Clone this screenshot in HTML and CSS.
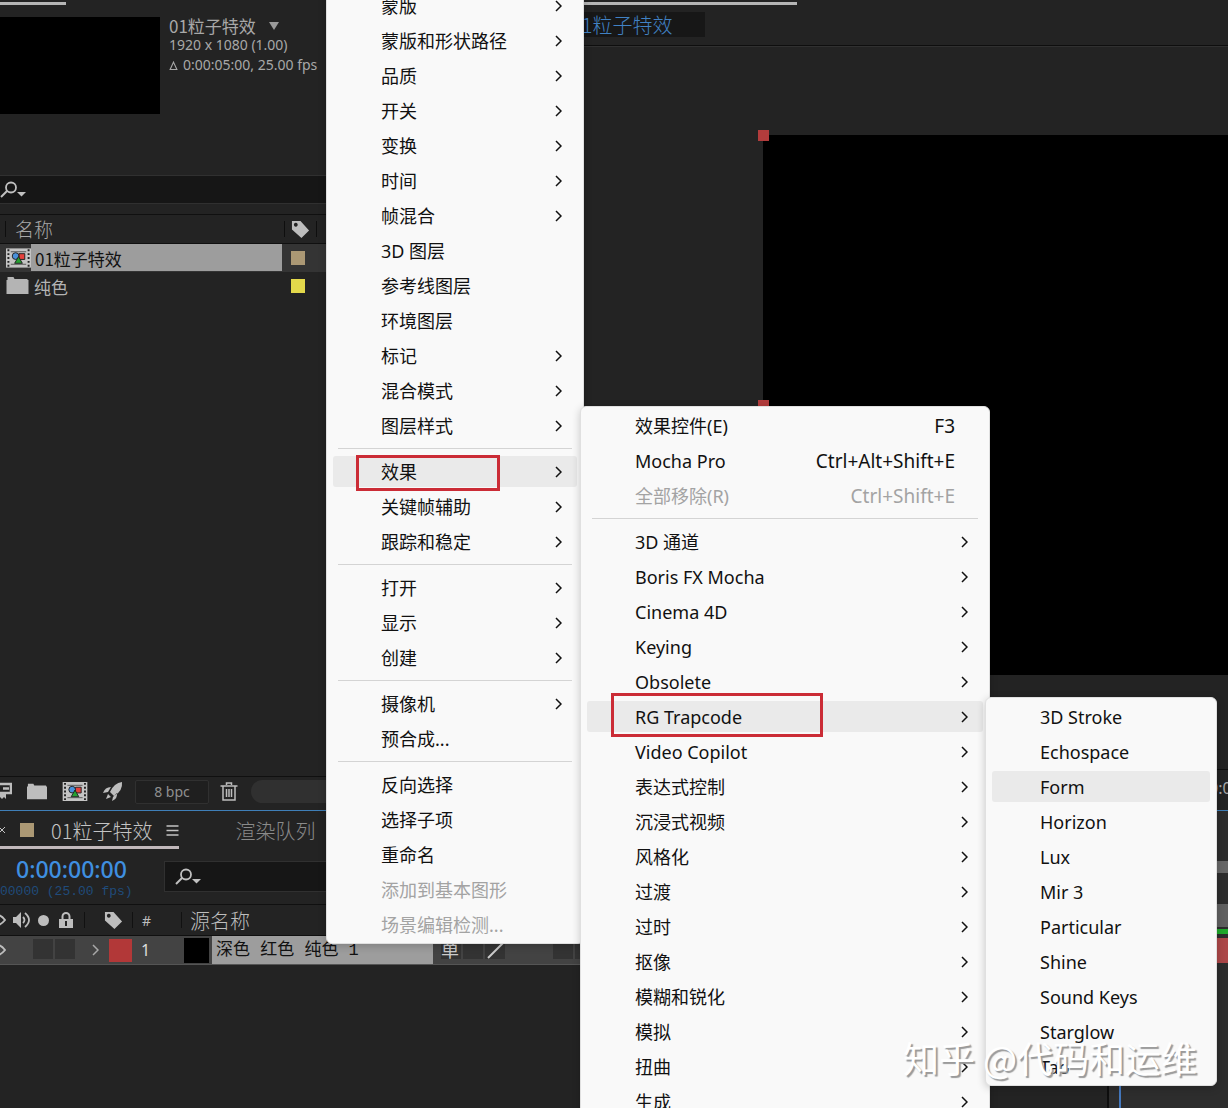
FILE: index.html
```
<!DOCTYPE html>
<html lang="zh-CN">
<head>
    <meta charset="UTF-8">
    <meta name="viewport" content="width=device-width, initial-scale=1.0">
    <title>01粒子特效</title>
    <link rel="stylesheet" href="styles.css">
</head>
<body>
    <!-- shared icons -->
    <svg class="sprite" aria-hidden="true">
        <symbol id="chevron" viewBox="0 0 7 12"><path d="M1 1l5 5-5 5" fill="none" stroke="currentColor" stroke-width="1.5"/></symbol>
        <symbol id="search" viewBox="0 0 26 18"><circle cx="11" cy="6.500" r="5" fill="none" stroke="currentColor" stroke-width="1.800"/><path d="M7 10l-6 6" stroke="currentColor" stroke-width="2"/><path d="M17 11h9l-4.500 4.500z" fill="currentColor"/></symbol>
        <symbol id="tag" viewBox="0 0 20 20"><path fill="currentColor" fill-rule="evenodd" d="M1 1h9l9 10-8 8L1 10zM5 3a2 2 0 1 0 .1 0z"/></symbol>
        <symbol id="folder" viewBox="0 0 22 17"><path fill="currentColor" d="M1 0h6l1 2h13v1H1zM0 3h22v14H0z"/></symbol>
        <symbol id="comp" viewBox="0 0 26 20">
            <path fill="#c4c4c4" d="M0 0h26v20H0z"/>
            <path fill="none" stroke="#222" stroke-width="2" stroke-dasharray="2 2" d="M2.500 1v18M23.500 1v18"/>
            <path fill="none" stroke="#555" d="M5 3.500h16M5 16.500h16"/>
            <path fill="#e5403c" stroke="#222" d="M13.500 5.500h6v6h-6z"/>
            <circle cx="10" cy="8" r="3.500" fill="#4a90d9" stroke="#222"/>
            <path fill="#25a233" stroke="#222" d="M13 8.500l4 7H9z"/>
        </symbol>
        <symbol id="eye" viewBox="0 0 18 12"><path fill="none" stroke="currentColor" stroke-width="2" d="M1 6q8-10 16 0-8 10-16 0z"/><circle cx="9" cy="6" r="2.500" fill="currentColor"/></symbol>
    </svg>

    <main class="app">
        <div class="workspace">
            <section class="project">
                <div class="tabline"></div>
                <div class="preview">
                    <div class="thumb"></div>
                    <div class="info">
                        <p class="comp-name">01粒子特效 <span class="caret"></span></p>
                        <p>1920 x 1080 (1.00)</p>
                        <p class="duration"><svg viewBox="0 0 8 8"><path fill="none" stroke="currentColor" d="M4 1l3 6.500H1z"/></svg>0:00:05:00, 25.00 fps</p>
                    </div>
                </div>
                <label class="search"><svg><use href="#search"/></svg><input type="text" aria-label="搜索项目"></label>
                <table class="items">
                    <thead>
                        <tr><th>名称</th><th class="label"><svg aria-label="标签"><use href="#tag"/></svg></th><th></th></tr>
                    </thead>
                    <tbody>
                        <tr class="selected">
                            <td><div class="item"><svg><use href="#comp"/></svg><span>01粒子特效</span></div></td>
                            <td class="label"><i class="swatch tan"></i></td><td></td>
                        </tr>
                        <tr>
                            <td><div class="item"><svg class="folder"><use href="#folder"/></svg><span>纯色</span></div></td>
                            <td class="label"><i class="swatch yellow"></i></td><td></td>
                        </tr>
                    </tbody>
                </table>
                <div class="project-bar">
                    <button aria-label="解释素材"><svg viewBox="0 0 12 19"><path fill="none" stroke="currentColor" stroke-width="2.500" d="M0 2h11v9H0M3 6.500h6"/><path fill="currentColor" d="M0 11h6v6l-2-2-2 2-2-2z"/></svg></button>
                    <button aria-label="新建文件夹"><svg viewBox="0 0 20 18"><use href="#folder" width="20" height="18"/></svg></button>
                    <button aria-label="新建合成"><svg class="wide"><use href="#comp"/></svg></button>
                    <button aria-label="项目设置"><svg viewBox="0 0 20 19"><path fill="currentColor" d="M19 0q-8 1-12 10l4 4Q20 9 19 0zM8 5q-6 0-8 6l5-1zM14 11q1 5-5 8l1-4zM5 12l3 3-5 2z"/></svg></button>
                    <button class="depth">8 bpc</button>
                    <button aria-label="删除"><svg viewBox="0 0 17 19"><path fill="none" stroke="currentColor" stroke-width="1.500" d="M0 4h17M6 3V1h5v2M2.500 4v14h12V4M6 7v8M8.500 7v8M11 7v8"/></svg></button>
                    <div class="scroller"></div>
                </div>
            </section>
            <section class="viewer">
                <div class="tabline"></div>
                <div class="crumbs"><a href="#">01粒子特效</a></div>
                <div class="stage">
                    <div class="canvas"><i class="handle corner"></i><i class="handle middle"></i></div>
                </div>
                <div class="viewer-bar">0:00:00:00</div>
            </section>
        </div>

        <section class="timeline">
            <div class="layers">
                <div class="tabs">
                    <button class="close" aria-label="关闭"><svg viewBox="0 0 6 8"><path stroke="currentColor" d="M-1 1l6 6M-1 7l6-6"/></svg></button>
                    <i class="swatch tan"></i>
                    <span class="current">01粒子特效</span>
                    <svg class="burger" viewBox="0 0 12 11"><path stroke="currentColor" stroke-width="1.500" d="M0 1h12M0 5.500h12M0 10h12"/></svg>
                    <span class="queue">渲染队列</span>
                </div>
                <div class="time">
                    <div class="clock">
                        <strong>0:00:00:00</strong>
                        <span>00000 (25.00 fps)</span>
                    </div>
                    <label class="search"><svg><use href="#search"/></svg><input type="text" aria-label="搜索图层"></label>
                </div>
                <div class="columns">
                    <div class="switches">
                        <svg class="eye"><use href="#eye"/></svg>
                        <svg viewBox="0 0 18 16"><path fill="currentColor" d="M0 5h3l5-5v16l-5-5H0z"/><path fill="none" stroke="currentColor" stroke-width="1.800" d="M10 5q3 3 0 6M12 1q8 7 0 14"/></svg>
                        <i class="dot"></i>
                        <svg class="lock" viewBox="0 0 14 16"><path fill="none" stroke="currentColor" stroke-width="2" d="M3.500 8V4.500a3.500 3.500 0 0 1 7 0V8"/><path fill="currentColor" fill-rule="evenodd" d="M0 7h14v9H0zM6 9v5h2V9z"/></svg>
                    </div>
                    <div class="tagcol"><svg class="tag"><use href="#tag"/></svg></div>
                    <div class="num">#</div>
                    <div class="source">源名称</div>
                </div>
                <div class="layer">
                    <svg class="eye"><use href="#eye"/></svg>
                    <i class="cell first"></i><i class="cell"></i>
                    <svg class="twirl"><use href="#chevron"/></svg>
                    <i class="color"></i>
                    <span class="index">1</span>
                    <i class="solid"></i>
                    <span class="name">深色 红色 纯色 1</span>
                    <i class="cell mark">单</i><i class="cell"></i>
                    <i class="cell"><svg viewBox="0 0 20 20"><path stroke="#ccc" stroke-width="2" d="M3 19L18 4"/></svg></i>
                    <i class="cell far"></i><i class="cell"></i>
                </div>
            </div>
            <div class="track">
                <div class="navigator"></div>
                <div class="ruler"></div>
                <div class="cache"></div>
                <div class="clip"></div>
                <div class="playhead"></div>
            </div>
        </section>
    </main>

    <nav class="menu layer-menu" aria-label="图层">
        <button>蒙版<svg><use href="#chevron"/></svg></button>
        <button>蒙版和形状路径<svg><use href="#chevron"/></svg></button>
        <button>品质<svg><use href="#chevron"/></svg></button>
        <button>开关<svg><use href="#chevron"/></svg></button>
        <button>变换<svg><use href="#chevron"/></svg></button>
        <button>时间<svg><use href="#chevron"/></svg></button>
        <button>帧混合<svg><use href="#chevron"/></svg></button>
        <button>3D 图层</button>
        <button>参考线图层</button>
        <button>环境图层</button>
        <button>标记<svg><use href="#chevron"/></svg></button>
        <button>混合模式<svg><use href="#chevron"/></svg></button>
        <button>图层样式<svg><use href="#chevron"/></svg></button>
        <hr>
        <button class="open">效果<svg><use href="#chevron"/></svg></button>
        <button>关键帧辅助<svg><use href="#chevron"/></svg></button>
        <button>跟踪和稳定<svg><use href="#chevron"/></svg></button>
        <hr>
        <button>打开<svg><use href="#chevron"/></svg></button>
        <button>显示<svg><use href="#chevron"/></svg></button>
        <button>创建<svg><use href="#chevron"/></svg></button>
        <hr>
        <button>摄像机<svg><use href="#chevron"/></svg></button>
        <button>预合成...</button>
        <hr>
        <button>反向选择</button>
        <button>选择子项</button>
        <button>重命名</button>
        <button disabled>添加到基本图形</button>
        <button disabled>场景编辑检测...</button>
    </nav>

    <nav class="menu effect-menu" aria-label="效果">
        <button>效果控件(E)<kbd>F3</kbd></button>
        <button>Mocha Pro<kbd>Ctrl+Alt+Shift+E</kbd></button>
        <button disabled>全部移除(R)<kbd>Ctrl+Shift+E</kbd></button>
        <hr>
        <button>3D 通道<svg><use href="#chevron"/></svg></button>
        <button>Boris FX Mocha<svg><use href="#chevron"/></svg></button>
        <button>Cinema 4D<svg><use href="#chevron"/></svg></button>
        <button>Keying<svg><use href="#chevron"/></svg></button>
        <button>Obsolete<svg><use href="#chevron"/></svg></button>
        <button class="open">RG Trapcode<svg><use href="#chevron"/></svg></button>
        <button>Video Copilot<svg><use href="#chevron"/></svg></button>
        <button>表达式控制<svg><use href="#chevron"/></svg></button>
        <button>沉浸式视频<svg><use href="#chevron"/></svg></button>
        <button>风格化<svg><use href="#chevron"/></svg></button>
        <button>过渡<svg><use href="#chevron"/></svg></button>
        <button>过时<svg><use href="#chevron"/></svg></button>
        <button>抠像<svg><use href="#chevron"/></svg></button>
        <button>模糊和锐化<svg><use href="#chevron"/></svg></button>
        <button>模拟<svg><use href="#chevron"/></svg></button>
        <button>扭曲<svg><use href="#chevron"/></svg></button>
        <button>生成<svg><use href="#chevron"/></svg></button>
    </nav>

    <nav class="menu trapcode-menu" aria-label="RG Trapcode">
        <button>3D Stroke</button>
        <button>Echospace</button>
        <button class="open">Form</button>
        <button>Horizon</button>
        <button>Lux</button>
        <button>Mir 3</button>
        <button>Particular</button>
        <button>Shine</button>
        <button>Sound Keys</button>
        <button>Starglow</button>
        <button>Tao</button>
    </nav>

    <div class="callout callout-effect"></div>
    <div class="callout callout-trapcode"></div>
    <div class="watermark">知乎 @代码和运维</div>
</body>
</html>
```
FILE: styles.css
```
* {
    box-sizing: border-box;
}
body {
    margin: 0;
    position: relative;
    height: 100vh;
    overflow: hidden;
    background: #232323;
    color: #a8a8a8;
    font-family: "Noto Sans", "Noto Sans CJK SC", sans-serif;
    font-size: 18px;
}
button {
    font: inherit;
    color: inherit;
    background: none;
    border: 0;
    padding: 0;
}
p {
    margin: 0;
}
svg {
    display: block;
    flex: none;
}
.sprite {
    display: none;
}
.app {
    height: 100vh;
    display: flex;
    flex-direction: column;
}
.workspace {
    flex: 1;
    display: flex;
    min-height: 0;
}

/* project panel */
.project {
    flex: 0 0 360px;
    display: flex;
    flex-direction: column;
}
.tabline {
    width: 66px;
    height: 3px;
    margin-top: 2px;
    background: #b5b5b5;
}
.preview {
    display: flex;
    gap: 9px;
    height: 170px;
    padding-top: 12px;
}
.thumb {
    width: 160px;
    height: 97px;
    background: #000;
}
.info {
    margin-top: -1px;
    font-size: 14px;
    line-height: 20px;
    white-space: nowrap;
}
.duration {
    display: flex;
    align-items: center;
    gap: 5px;
}
.duration svg {
    width: 9px;
    height: 9px;
}
.comp-name {
    font-family: "Noto Sans CJK SC", sans-serif;
    font-size: 17px;
    line-height: 19px;
}
.caret {
    display: inline-block;
    margin-left: 9px;
    vertical-align: 3px;
    border: 5px solid transparent;
    border-top: 8px solid #9a9a9a;
    border-bottom: 0;
}
.search {
    display: flex;
    align-items: center;
    height: 29px;
    background: #161616;
    border: 1px solid #303030;
    border-left: 0;
    color: #c0c0c0;
}
.search svg {
    width: 26px;
    height: 18px;
}
.search input {
    flex: 1;
    min-width: 0;
    background: none;
    border: 0;
}
.items {
    width: 100%;
    margin-top: 10px;
    border-collapse: collapse;
    border-top: 1px solid #101010;
    table-layout: fixed;
    font-family: "Noto Sans CJK SC", sans-serif;
}
.items th {
    height: 29px;
    padding: 0 0 0 15px;
    text-align: left;
    font-weight: 300;
    line-height: 26px;
    border-bottom: 1px solid #101010;
    font-size: 19px;
    background: linear-gradient(#0e0e0e, #0e0e0e) 5px 50% / 1px 16px no-repeat;
}
.items td {
    height: 28px;
    padding: 0;
    font-size: 17px;
}
.items .label {
    width: 34px;
    padding: 0 0 0 9px;
    background-position-x: 2px;
}
.items th:last-child {
    width: 44px;
    background-position-x: 0;
}
.items th svg {
    width: 19px;
    height: 19px;
    color: #bdbdbd;
}
.item {
    display: flex;
    align-items: center;
    gap: 4px;
    padding-left: 6px;
    color: #b4b4b4;
}
.item svg {
    width: 25px;
    height: 20px;
}
.item .folder {
    width: 23px;
    height: 17px;
    margin-right: 1px;
}
.item span {
    height: 27px;
    line-height: 29px;
}
.selected {
    background: #343434;
}
.selected .item {
    gap: 0;
}
.selected span {
    flex: 1;
    padding-left: 4px;
    background: #9d9d9d;
    color: #111;
}
.swatch {
    display: block;
    width: 14px;
    height: 14px;
}
.tan {
    background: #ab9874;
}
.yellow {
    background: #e3d84b;
}
.project-bar {
    display: flex;
    align-items: center;
    gap: 15px;
    height: 34px;
    margin-top: auto;
    padding-bottom: 4px;
    border-top: 1px solid #101010;
    color: #bdbdbd;
}
.project-bar svg {
    width: 20px;
    height: 19px;
}
.project-bar button:first-child svg {
    width: 12px;
}
.project-bar .wide {
    width: 26px;
}
.project-bar .depth {
    width: 74px;
    height: 24px;
    border: 1px solid #303030;
    border-radius: 2px;
    background: #1f1f1f;
    font-size: 14px;
    line-height: 20px;
    color: #8f8f8f;
    margin: 0 -5px 0 -3px;
}
.scroller {
    flex: 1;
    height: 23px;
    border-radius: 12px;
    background: #303030;
    margin-left: -3px;
}

/* composition viewer */
.viewer {
    flex: 1;
    min-width: 0;
    display: flex;
    flex-direction: column;
    overflow: hidden;
}
.viewer .tabline {
    width: 437px;
}
.crumbs {
    height: 41px;
    padding-top: 7px;
    border-bottom: 1px solid #0e0e0e;
}
.crumbs a {
    display: block;
    width: 345px;
    padding-left: 211px;
    background: #171717;
    color: #4182c4;
    font-family: "Noto Sans CJK SC", sans-serif;
    font-weight: 300;
    font-size: 20px;
    line-height: 25px;
    text-decoration: none;
}
.stage {
    flex: 1;
    padding: 88px 0 94px 403px;
    border-top: 1px solid #303030;
    display: flex;
}
.canvas {
    position: relative;
    flex: 1;
    background: #000;
}
.handle {
    position: absolute;
    left: -5px;
    width: 11px;
    height: 11px;
    background: #b23c3c;
}
.corner {
    top: -5px;
}
.middle {
    top: calc(50% - 5px);
}
.viewer-bar {
    height: 41px;
    border-top: 1px solid #101010;
    text-align: right;
    font-size: 16px;
    line-height: 36px;
    margin-right: -58px;
}

/* timeline */
.timeline {
    display: flex;
    height: 298px;
    border-top: 1px solid #3f7fb8;
}
.layers {
    flex: 1;
    min-width: 0;
}
.tabs {
    display: flex;
    align-items: center;
    height: 38px;
    font-family: "Noto Sans CJK SC", sans-serif;
    font-weight: 300;
    font-size: 20px;
    line-height: 35px;
    color: #c4c4c4;
    background: linear-gradient(#c1b8bb, #c1b8bb) 0 100% / 179px 3px no-repeat;
}
.close {
    margin-right: 14px;
}
.close svg {
    width: 6px;
    height: 8px;
}
.current {
    margin: 0 14px 0 17px;
}
.burger {
    width: 13px;
    height: 11px;
}
.queue {
    margin-left: 56px;
    color: #8a8a8a;
}
.time {
    display: flex;
    height: 56px;
    padding-top: 8px;
    border-bottom: 1px solid #101010;
}
.clock {
    width: 164px;
    padding-left: 16px;
}
.clock strong {
    display: block;
    font-size: 23px;
    line-height: 24px;
    font-weight: 500;
    color: #3f8fe0;
}
.clock span {
    display: block;
    margin-left: -16px;
    font-family: "Liberation Mono", monospace;
    font-size: 13px;
    line-height: 22px;
    color: #204b7a;
    white-space: nowrap;
}
.time .search {
    flex: 1;
    height: 31px;
    margin-top: 4px;
    padding-left: 10px;
    border-left: 1px solid #303030;
}
.columns {
    display: flex;
    align-items: center;
    height: 31px;
    border-bottom: 1px solid #101010;
    color: #bdbdbd;
}
.columns > div + div {
    border-left: 1px solid #111;
    height: 16px;
    display: flex;
    align-items: center;
}
.switches {
    display: flex;
    align-items: center;
    width: 84px;
    gap: 7px;
}
.switches svg {
    width: 18px;
    height: 16px;
}
.eye,
.switches .eye {
    width: 18px;
    height: 12px;
    margin-left: -12px;
    color: #bdbdbd;
}
.dot {
    width: 11px;
    height: 11px;
    border-radius: 50%;
    background: #bdbdbd;
}
.switches .lock {
    width: 14px;
    margin-left: 3px;
}
.tagcol {
    width: 48px;
    padding-left: 19px;
}
.tag {
    width: 19px;
    height: 19px;
}
.num {
    width: 49px;
    padding-left: 9px;
    font-size: 14px;
}
.source {
    padding-left: 8px;
    font-family: "Noto Sans CJK SC", sans-serif;
    font-weight: 300;
    font-size: 20px;
}
.layer {
    display: flex;
    align-items: center;
    height: 29px;
    background: #434343;
    border-bottom: 1px solid #555;
}
.cell {
    width: 20px;
    height: 20px;
    margin: -3px 2px 0 0;
    background: #333;
    font: normal 18px/20px "Noto Sans CJK SC", sans-serif;
    color: #ccc;
}
.cell.first {
    margin-left: 27px;
}
.twirl {
    width: 7px;
    height: 12px;
    margin: 0 10px 0 15px;
}
.color {
    width: 23px;
    height: 23px;
    background: #b23838;
}
.index {
    width: 52px;
    padding-left: 9px;
    font-size: 16px;
    color: #ddd;
}
.solid {
    width: 25px;
    height: 25px;
    background: #000;
    margin-right: 3px;
}
.name {
    width: 221px;
    height: 28px;
    padding-left: 4px;
    background: #9d9d9d;
    color: #111;
    font-family: "Liberation Mono", "Noto Sans CJK SC", monospace;
    font-size: 17px;
    line-height: 30px;
    white-space: nowrap;
}
.mark {
    margin-left: 8px;
}
.cell.far {
    margin-left: 46px;
}
.track {
    position: relative;
    width: 121px;
    padding-top: 50px;
    border-left: 2px solid #0e0e0e;
    background: #2d2d2d;
}
.navigator {
    height: 12px;
    background: #666;
}
.ruler {
    height: 23px;
    margin-top: 31px;
    background: #606060;
}
.cache {
    height: 5px;
    margin: 2px 0 4px;
    background: #20a82b;
}
.clip {
    height: 25px;
    background: #ac4748;
}
.playhead {
    position: absolute;
    top: 50px;
    bottom: 0;
    left: 10px;
    width: 2px;
    background: #4478bd;
}

/* menus */
.menu {
    position: absolute;
    display: flex;
    flex-direction: column;
    padding: 1px 6px;
    background: #f9f9f9;
    border: 1px solid #e0e0e0;
    border-radius: 6px;
    box-shadow: 0 2px 8px rgba(0, 0, 0, 0.2);
    color: #111;
}
.menu button {
    display: flex;
    align-items: center;
    justify-content: space-between;
    height: 31px;
    margin: 2px 0;
    padding: 0 15px 0 48px;
    border-radius: 3px;
    line-height: 30px;
    white-space: nowrap;
}
.menu .open {
    background: #eaeaea;
}
.menu button:disabled {
    color: #a3a3a3;
}
.menu svg {
    width: 7px;
    height: 12px;
}
.menu kbd {
    margin-right: 13px;
    font-family: inherit;
    font-size: 19px;
}
.menu hr {
    height: 1px;
    margin: 5px;
    border: 0;
    background: #d4d4d4;
}
.layer-menu {
    left: 326px;
    top: -14px;
    width: 258px;
}
.effect-menu {
    left: 580px;
    top: 406px;
    width: 410px;
}
.trapcode-menu {
    left: 985px;
    top: 697px;
    width: 232px;
}

/* annotations */
.callout {
    position: absolute;
    border: 3px solid #cb2c36;
}
.callout-effect {
    left: 356px;
    top: 455px;
    width: 144px;
    height: 36px;
}
.callout-trapcode {
    left: 611px;
    top: 693px;
    width: 212px;
    height: 44px;
}
.watermark {
    position: absolute;
    right: 31px;
    bottom: 30px;
    font-family: "Noto Sans CJK SC", sans-serif;
    font-size: 36px;
    line-height: 42px;
    color: #fff;
    text-shadow: 2px 2px 1px #999;
}
```
